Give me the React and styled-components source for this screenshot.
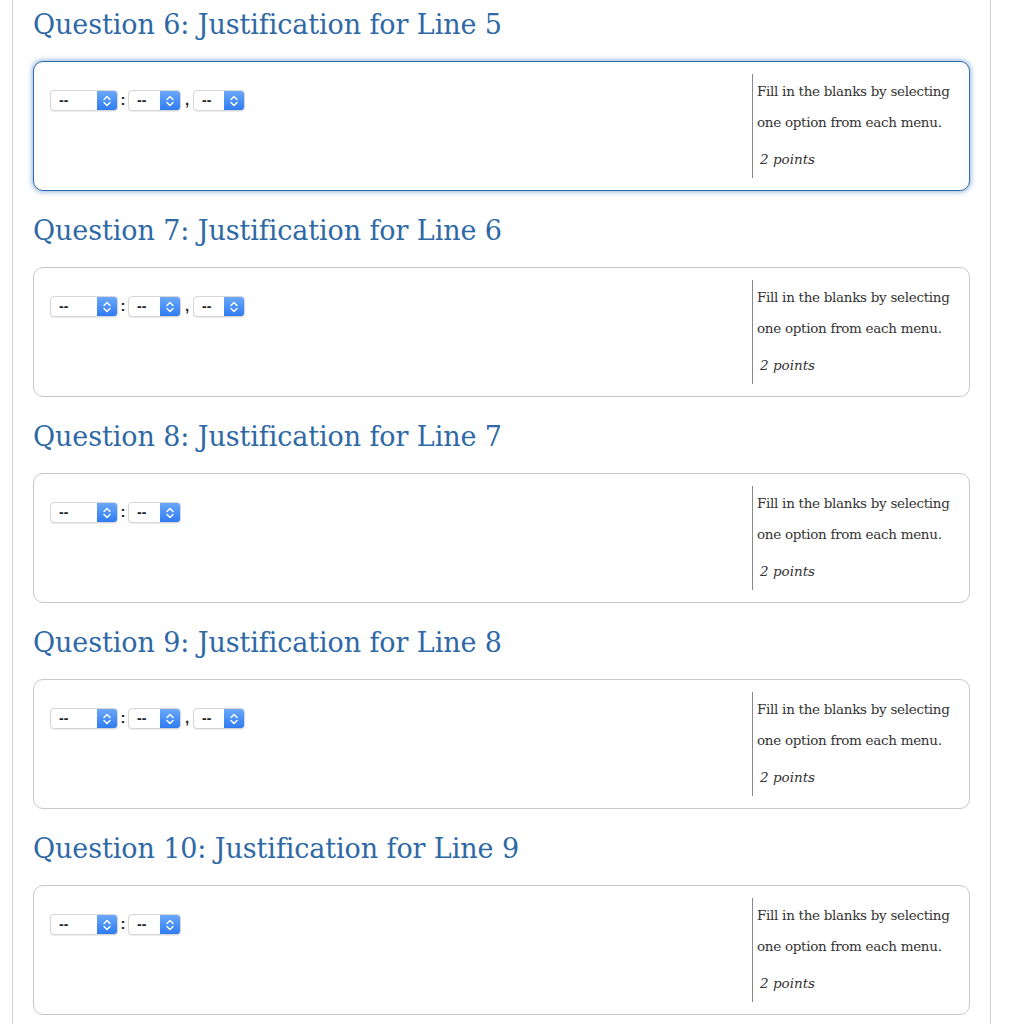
import React from 'react'
import styled, { createGlobalStyle } from 'styled-components'

const GlobalStyle = createGlobalStyle`
  html, body { margin: 0; padding: 0; background: #fff; }
  body { font-family: "DejaVu Serif", Georgia, serif; }
`

const questions = [
  { num: 6, line: 5, selects: [68, 53, 52], focused: true },
  { num: 7, line: 6, selects: [68, 53, 52] },
  { num: 8, line: 7, selects: [68, 53] },
  { num: 9, line: 8, selects: [68, 53, 52] },
  { num: 10, line: 9, selects: [68, 53] },
]

function Arrows() {
  return (
    <svg width="10" height="14" viewBox="0 0 10 14">
      <path d="M2 5.5 L5 2.5 L8 5.5 M2 8.5 L5 11.5 L8 8.5" fill="none" stroke="#fff" strokeWidth="1.4" strokeLinecap="round" strokeLinejoin="round" />
    </svg>
  )
}

function Dropdown({ width }) {
  return (
    <Select $w={width}>
      <SelectText>--</SelectText>
      <SelectButton><Arrows /></SelectButton>
    </Select>
  )
}

export default function App() {
  return (
    <Page>
      <GlobalStyle />
      {questions.map((q) => (
        <Question key={q.num}>
          <Heading>Question {q.num}: Justification for Line {q.line}</Heading>
          <Card $focused={q.focused}>
            <Blanks>
              {q.selects.map((w, i) => (
                <React.Fragment key={i}>
                  {i === 1 && <Sep>:</Sep>}
                  {i === 2 && <Sep $comma>,</Sep>}
                  <Dropdown width={w} />
                </React.Fragment>
              ))}
            </Blanks>
            <Info>
              <InfoText>Fill in the blanks by selecting one option from each menu.</InfoText>
              <Points>2 points</Points>
            </Info>
          </Card>
        </Question>
      ))}
    </Page>
  )
}

const Page = styled.div`
  margin-left: 12px;
  width: 979px;
  border-left: 1px solid #d0d0d0;
  border-right: 1px solid #d0d0d0;
  padding: 0 19px 12px 20px;
  box-sizing: border-box;
  min-height: 1024px;
`

const Question = styled.div`
  padding-top: 4px;
`

const Heading = styled.h2`
  margin: 0;
  height: 57px;
  line-height: 42px;
  font-size: 27px;
  font-weight: normal;
  color: #2e69a6;
  letter-spacing: -0.1px;
  white-space: nowrap;
`

const Card = styled.div`
  display: flex;
  width: 937px;
  height: 130px;
  box-sizing: border-box;
  margin-bottom: 15px;
  border-radius: 10px;
  border: ${(p) => (p.$focused ? '1.5px solid #2f6db3' : '1px solid #c8c8c8')};
  box-shadow: ${(p) => (p.$focused ? '0 0 5px 1px rgba(47,109,179,0.5)' : 'none')};
  background: #fff;
`

const Blanks = styled.div`
  flex: 1;
  display: flex;
  align-items: flex-start;
  padding: 28px 0 0 16px;
`

const Select = styled.div`
  display: flex;
  width: ${(p) => p.$w}px;
  height: 21px;
  box-sizing: border-box;
  border: 1px solid #d6d6d6;
  border-radius: 4px;
  overflow: hidden;
  background: #fff;
  box-shadow: 0 1px 1px rgba(0,0,0,0.08);
`

const SelectText = styled.span`
  flex: 1;
  font-family: "Liberation Sans", Arial, sans-serif;
  font-size: 14px;
  font-weight: bold;
  line-height: 19px;
  padding-left: 8px;
  color: #222;
`

const SelectButton = styled.span`
  width: 20px;
  display: flex;
  align-items: center;
  justify-content: center;
  background: linear-gradient(#6aa8fb, #2f7bf0);
`

const Sep = styled.span`
  font-family: "Liberation Sans", Arial, sans-serif;
  font-size: 15px;
  font-weight: bold;
  line-height: 20px;
  width: ${(p) => (p.$comma ? '12px' : '10px')};
  text-align: center;
  color: #222;
`

const Info = styled.div`
  width: 217px;
  margin: 12px 0 12px;
  border-left: 1px solid #888;
  padding: 0 12px 0 4px;
  box-sizing: border-box;
`

const InfoText = styled.div`
  font-size: 13.5px;
  line-height: 31px;
  color: #333;
  margin-top: 2px;
  letter-spacing: -0.3px;
`

const Points = styled.div`
  font-size: 13.5px;
  font-style: italic;
  line-height: 24px;
  margin-top: 9px;
  padding-left: 3px;
  color: #333;
`
